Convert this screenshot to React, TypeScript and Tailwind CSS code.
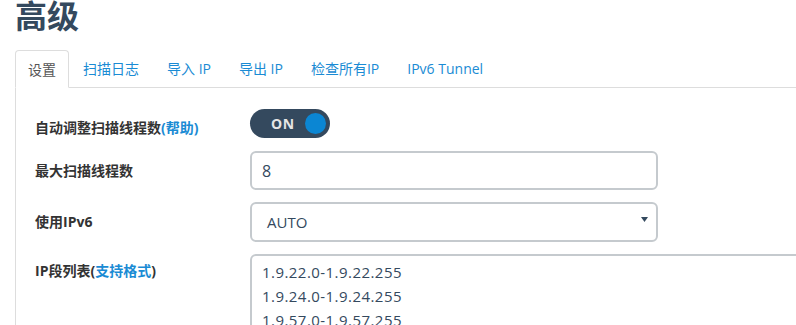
import React from 'react';

const font = { fontFamily: '"Open Sans", "Noto Sans CJK SC", sans-serif' };

const tabs = ['设置', '扫描日志', '导入 IP', '导出 IP', '检查所有IP', 'IPv6 Tunnel'];

const ipRanges = ['1.9.22.0-1.9.22.255', '1.9.24.0-1.9.24.255', '1.9.57.0-1.9.57.255', '1.9.59.0-1.9.59.255'];

function Row({ label, pt, children }: { label: React.ReactNode; pt: string; children: React.ReactNode }) {
  return (
    <div className="flex items-start">
      <div className={`w-[215px] shrink-0 text-[14px] leading-[20px] font-bold text-[#333] ${pt}`}>{label}</div>
      {children}
    </div>
  );
}

export default function App() {
  return (
    <div className="w-[900px] pl-[15px] bg-white overflow-hidden h-[325px]" style={font}>
      <h1 className="text-[32px] leading-[34px] font-bold text-[#34495e] -mt-[1px]">高级</h1>

      <div className="mt-[17px] flex border-b border-[#ddd] h-[38px]">
        {tabs.map((t, i) =>
          i === 0 ? (
            <div
              key={t}
              className="px-[12px] h-[38px] leading-[37px] text-[14px] text-[#555] border border-[#ddd] border-b-white rounded-t-[4px] bg-white"
            >
              {t}
            </div>
          ) : (
            <div key={t} className="px-[14px] h-[38px] leading-[37px] text-[14px] text-[#1a8bd4]">
              {t}
            </div>
          )
        )}
      </div>

      <div className="border-l border-[#ddd] pl-[19px] pt-[21px] flex flex-col">
        <Row label={<>自动调整扫描线程数<span className="text-[#1a8bd4]">(帮助)</span></>} pt="pt-[9px]">
          <div className="w-[80px] h-[29px] rounded-full bg-[#34495e] flex items-center justify-between pl-[21px] pr-[4px]">
            <span className="text-[14px] font-bold text-[#e6e6e6] tracking-[0.5px]">ON</span>
            <span className="w-[21px] h-[21px] rounded-full bg-[#0b86d3]" />
          </div>
        </Row>

        <div className="mt-[13px]">
          <Row label="最大扫描线程数" pt="pt-[10px]">
            <div className="w-[408px] h-[39px] border-2 border-[#c5cace] rounded-[6px] pl-[10px] flex items-center text-[16px] text-[#34495e]">
              8
            </div>
          </Row>
        </div>

        <div className="mt-[12px]">
          <Row label="使用IPv6" pt="pt-[10px]">
            <div className="w-[408px] h-[40px] border-2 border-[#c5cace] rounded-[6px] pl-[15px] pr-[8px] flex items-center justify-between text-[15px] text-[#34495e]">
              <span>AUTO</span>
              <svg width="7" height="5" viewBox="0 0 7 5" className="mb-[6px]">
                <path d="M0 0 H7 L3.5 5 Z" fill="#34495e" />
              </svg>
            </div>
          </Row>
        </div>

        <div className="mt-[12px]">
          <Row label={<>IP段列表(<span className="text-[#1a8bd4]">支持格式</span>)</>} pt="pt-[7px]">
            <div className="w-[600px] h-[120px] border-2 border-[#c5cace] rounded-[6px] pl-[10px] pt-[4px] text-[15px] tracking-[0.45px] leading-[24px] text-[#34495e]">
              {ipRanges.map((r) => (
                <div key={r}>{r}</div>
              ))}
            </div>
          </Row>
        </div>
      </div>
    </div>
  );
}
